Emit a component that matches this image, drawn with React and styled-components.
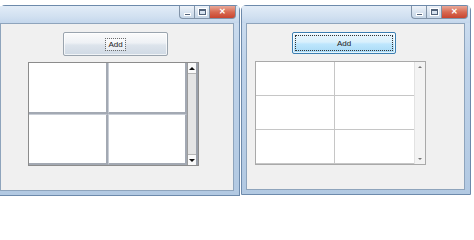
import React from 'react'
import styled, { createGlobalStyle } from 'styled-components'

const Global = createGlobalStyle`
  html, body {
    margin: 0;
    padding: 0;
    background: #ffffff;
    font-family: "Liberation Sans", Arial, sans-serif;
  }
`

const Desk = styled.div`
  width: 474px;
  height: 201px;
  display: flex;
  align-items: flex-start;
  gap: ${p => p.gap}px;
  overflow: hidden;
  background: #ffffff;
`

const Frame = styled.div`
  box-sizing: border-box;
  width: ${p => p.w}px;
  height: ${p => p.h}px;
  margin-top: 5px;
  display: flex;
  flex-direction: column;
  padding: 0 5px 4px ${p => p.left}px;
  background: linear-gradient(180deg, #cfdff0 0%, #bfd3ea 30%, #b2c9e2 100%);
  border: 1px solid #6d8aab;
  border-left-width: ${p => (p.left ? 1 : 0)}px;
  border-radius: 5px 5px 0 0;
`

const TitleBar = styled.div`
  height: 17px;
  display: flex;
  justify-content: flex-end;
  align-items: flex-start;
  padding-right: ${p => p.pr}px;
  background: linear-gradient(180deg, #e2ecf7 0%, #d2e1f1 60%, #c4d7ec 100%);
  margin: 0 -5px 0 -${p => p.left}px;
  padding-left: ${p => p.left}px;
`

const CapButton = styled.div`
  box-sizing: border-box;
  width: ${p => p.w}px;
  height: 13px;
  display: flex;
  align-items: center;
  justify-content: center;
  border: 1px solid #8193a8;
  border-top: none;
  border-right-width: ${p => (p.last ? 1 : 0)}px;
  background: ${p =>
    p.close
      ? 'linear-gradient(180deg, #e9a898 0%, #d86a52 50%, #c94530 100%)'
      : 'linear-gradient(180deg, #eef3f9 0%, #d8e3ef 50%, #c6d6e7 100%)'};
  border-radius: ${p => (p.first ? '0 0 0 4px' : p.last ? '0 0 4px 0' : '0')};
  color: ${p => (p.close ? '#ffffff' : '#3a4a5c')};
  font-size: 8px;
  font-weight: bold;
  line-height: 1;
`

const MinGlyph = styled.div`
  width: 5px;
  height: 1px;
  margin-top: 5px;
  background: #52637a;
  border: 1px solid #ffffff;
`

const MaxGlyph = styled.div`
  width: 5px;
  height: 3px;
  border: 1px solid #52637a;
  border-top-width: 2px;
  box-shadow: 0 0 0 1px #ffffff;
`

const Client = styled.div`
  flex: 1;
  display: flex;
  flex-direction: column;
  align-items: flex-start;
  background: #f0f0f0;
  border: 1px solid #8ea4bc;
  padding-top: ${p => p.pt}px;
`

const AddButton = styled.div`
  box-sizing: border-box;
  width: ${p => p.w}px;
  height: ${p => p.h}px;
  margin-left: ${p => p.ml}px;
  display: flex;
  align-items: center;
  justify-content: center;
  border: 1px solid ${p => (p.focused ? '#3c7fb1' : '#9aa4ae')};
  border-radius: 2px;
  background: ${p =>
    p.focused
      ? 'linear-gradient(180deg, #eaf6fd 0%, #d9f0fc 45%, #bee6fd 55%, #a7d9f5 100%)'
      : 'linear-gradient(180deg, #fbfbfb 0%, #eef1f5 45%, #dde4ec 55%, #cfd9e4 100%)'};
  box-shadow: inset 0 0 0 1px rgba(255, 255, 255, 0.7);
  padding: 2px;
`

const FocusRing = styled.div`
  box-sizing: border-box;
  width: 100%;
  height: 100%;
  display: flex;
  align-items: center;
  justify-content: center;
  border: 1px dotted ${p => (p.show ? '#333' : 'transparent')};
`

const Label = styled.span`
  font-size: 8px;
  color: #1a1a1a;
  padding: 1px 2px;
  outline: ${p => (p.ring ? '1px dotted #6b6b6b' : 'none')};
  background: ${p => (p.ring ? 'rgba(255,255,255,0.5)' : 'transparent')};
`

const TableBox = styled.div`
  box-sizing: border-box;
  margin-left: ${p => p.ml}px;
  margin-top: ${p => p.mt}px;
  display: flex;
  border: 1px solid ${p => (p.heavy ? '#8c8c8c' : '#a9a9a9')};
  background: #ffffff;
`

const Grid = styled.div`
  display: grid;
  grid-template-columns: ${p => p.cw}px ${p => p.cw}px;
  grid-auto-rows: ${p => p.rh}px;
  background: #ffffff;
`

const Cell = styled.div`
  box-sizing: border-box;
  background: #ffffff;
  border-right: ${p => (p.heavy ? '2px solid #a3a9b3' : '1px solid #c6c6c6')};
  border-bottom: ${p => (p.heavy ? '2px solid #a3a9b3' : '1px solid #c6c6c6')};
  border-left: ${p => (p.heavy && p.col === 1 ? '1px solid #c9ced6' : 'none')};
  border-top: ${p => (p.heavy && p.row > 0 ? '1px solid #c9ced6' : 'none')};
  ${p => (!p.heavy && p.col === 1 ? 'border-right: none;' : '')}
`

const ScrollBar = styled.div`
  box-sizing: border-box;
  width: 11px;
  display: flex;
  flex-direction: column;
  justify-content: space-between;
  background: ${p => (p.heavy ? '#e4e4e4' : '#f3f3f3')};
  border-left: 1px solid ${p => (p.heavy ? '#9c9c9c' : '#e2e2e2')};
  border-right: ${p => (p.heavy ? '2px solid #9aa0aa' : 'none')};
`

const Arrow = styled.div`
  height: 10px;
  display: flex;
  align-items: center;
  justify-content: center;
  background: ${p => (p.heavy ? '#fafafa' : 'transparent')};
  border-top: ${p => (p.heavy && p.down ? '1px solid #b5b5b5' : 'none')};
  border-bottom: ${p => (p.heavy && !p.down ? '1px solid #b5b5b5' : 'none')};
`

const Tri = styled.div`
  width: 0;
  height: 0;
  border-left: ${p => p.s}px solid transparent;
  border-right: ${p => p.s}px solid transparent;
  ${p => (p.down ? 'border-top' : 'border-bottom')}: ${p => p.s}px solid ${p => p.c};
`

const Caption = () => (
  <>
    <CapButton w={15} first>
      <MinGlyph />
    </CapButton>
    <CapButton w={15}>
      <MaxGlyph />
    </CapButton>
    <CapButton w={27} close last>
      ✕
    </CapButton>
  </>
)

const Table = ({ rows, rh, cw, heavy, ml, mt }) => {
  const cells = []
  for (let r = 0; r < rows; r++) {
    for (let c = 0; c < 2; c++) cells.push(<Cell key={r + '-' + c} row={r} col={c} heavy={heavy} />)
  }
  return (
    <TableBox ml={ml} mt={mt} heavy={heavy}>
      <Grid cw={cw} rh={rh}>{cells}</Grid>
      <ScrollBar heavy={heavy}>
        <Arrow heavy={heavy}>
          <Tri s={heavy ? 3 : 2} c={heavy ? '#111' : '#777'} />
        </Arrow>
        <Arrow heavy={heavy} down>
          <Tri s={heavy ? 3 : 2} c={heavy ? '#111' : '#777'} down />
        </Arrow>
      </ScrollBar>
    </TableBox>
  )
}

export default function App() {
  return (
    <>
      <Global />
      <Desk gap={1}>
        <Frame w={240} h={191} left={0}>
          <TitleBar pr={3} left={0}>
            <Caption />
          </TitleBar>
          <Client pt={8}>
            <AddButton w={105} h={24} ml={62}>
              <Label ring>Add</Label>
            </AddButton>
            <Table rows={2} rh={51} cw={79} heavy ml={27} mt={6} />
          </Client>
        </Frame>
        <Frame w={230} h={190} left={4}>
          <TitleBar pr={2} left={4}>
            <Caption />
          </TitleBar>
          <Client pt={8}>
            <AddButton w={104} h={22} ml={45} focused>
              <FocusRing show>
                <Label>Add</Label>
              </FocusRing>
            </AddButton>
            <Table rows={3} rh={34} cw={79} ml={8} mt={7} />
          </Client>
        </Frame>
      </Desk>
    </>
  )
}
